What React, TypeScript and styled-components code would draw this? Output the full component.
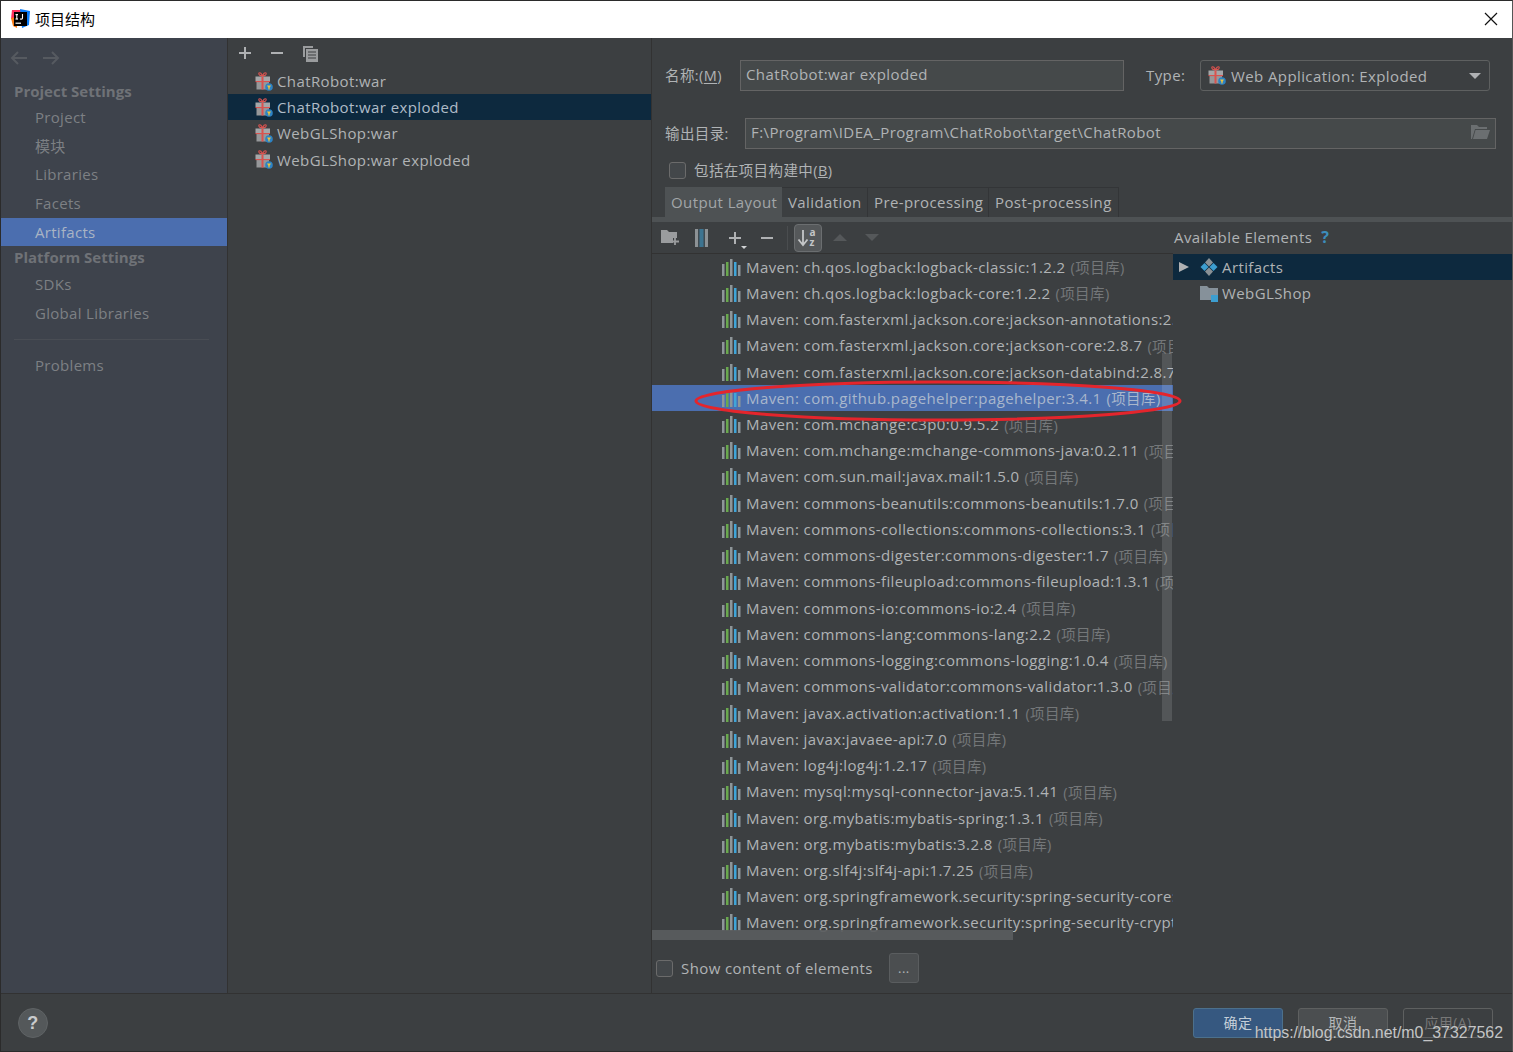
import styled, { createGlobalStyle } from "styled-components";

const GlobalStyle = createGlobalStyle`
  html, body {
    margin: 0;
    padding: 0;
    background: #3c3f41;
  }
  * {
    box-sizing: border-box;
  }
  svg {
    flex: none;
  }
`;

const Window = styled.div`
  position: relative;
  width: 1513px;
  height: 1052px;
  display: flex;
  flex-direction: column;
  overflow: hidden;
  background: #3c3f41;
  border: 1px solid #2b2b2b;
  border-right-color: #555;
  font-family: "Open Sans", "Noto Sans CJK SC", sans-serif;
  font-size: 15px;
  letter-spacing: 0.4px;
  color: #b0b3b5;
`;

const TitleBar = styled.div`
  height: 37px;
  flex: none;
  display: flex;
  align-items: center;
  padding: 0 14px 2px 9px;
  gap: 5px;
  background: #fff;
  color: #000;
  font-size: 15px;
  letter-spacing: 0;
  font-family: "Noto Sans CJK SC", sans-serif;
`;

const TitleText = styled.span`
  flex: 1;
`;

const Body = styled.div`
  flex: 1;
  min-height: 0;
  display: flex;
`;

const Sidebar = styled.nav`
  width: 227px;
  flex: none;
  background: #3e434c;
  border-right: 1px solid #323232;
  color: #7d8084;
  letter-spacing: 0.3px;
`;

const NavArrows = styled.div`
  height: 40px;
  display: flex;
  align-items: center;
  padding: 0 0 0 9px;
  gap: 14px;
`;

const NavHeading = styled.div<{ $compact?: boolean }>`
  height: ${(p) => (p.$compact ? 24 : 26)}px;
  line-height: ${(p) => (p.$compact ? 22 : 26)}px;
  padding-left: 13px;
  font-weight: 700;
  letter-spacing: 0;
  color: #6f7277;
  margin-bottom: ${(p) => (p.$compact ? 0 : -1)}px;
`;

const NavItem = styled.div<{ $active?: boolean }>`
  height: 28.7px;
  line-height: 28px;
  padding-left: 34px;
  background: ${(p) => (p.$active ? "#4b6eaf" : "transparent")};
  color: ${(p) => (p.$active ? "#a9b4c4" : "inherit")};
`;

const NavDivider = styled.div`
  height: 1px;
  margin: 11px 18px 11px 13px;
  background: #494d54;
`;

const ArtifactPanel = styled.div`
  width: 424px;
  flex: none;
  display: flex;
  flex-direction: column;
  background: #3c3f41;
  border-right: 1px solid #323232;
`;

const SmallToolbar = styled.div`
  height: 30px;
  display: flex;
  align-items: center;
  padding-left: 10px;
  gap: 18px;
`;

const ArtifactRow = styled.div<{ $selected?: boolean }>`
  height: 26.2px;
  display: flex;
  align-items: center;
  gap: 4px;
  padding-left: 27px;
  background: ${(p) => (p.$selected ? "#0d293e" : "transparent")};
  color: ${(p) => (p.$selected ? "#b0bcc8" : "inherit")};
`;

const Main = styled.div`
  flex: 1;
  min-width: 0;
  display: flex;
  flex-direction: column;
`;

const FormRow = styled.div<{ $top: number }>`
  height: 31px;
  flex: none;
  margin-top: ${(p) => p.$top}px;
  display: flex;
  align-items: center;
  padding-left: 13px;
`;

const FieldLabel = styled.label<{ $width: number }>`
  width: ${(p) => p.$width}px;
  flex: none;
  font-size: 14.5px;
  margin-top: -2px;

  u {
    text-underline-offset: 2px;
  }
`;

const TextField = styled.div<{ $width: number }>`
  width: ${(p) => p.$width}px;
  height: 100%;
  flex: none;
  display: flex;
  align-items: center;
  justify-content: space-between;
  padding: 0 5px 3px;
  background: #45494a;
  border: 1px solid #646464;
`;

const TypeLabel = styled.span`
  margin-left: 22px;
  width: 54px;
  margin-top: -2px;
`;

const Select = styled.div`
  width: 290px;
  height: 100%;
  display: flex;
  align-items: center;
  gap: 5px;
  padding: 0 7px;
  border: 1px solid #5e6060;
  border-radius: 3px;
`;

const SelectText = styled.span`
  flex: 1;
  white-space: nowrap;
`;

const Caret = styled.span`
  width: 0;
  height: 0;
  border-left: 6px solid transparent;
  border-right: 6px solid transparent;
  border-top: 6px solid #afb1b3;
  margin-right: 1px;
`;

const CheckRow = styled.div`
  height: 18px;
  flex: none;
  margin-top: 12px;
  display: flex;
  align-items: center;
  gap: 8px;
  padding-left: 17px;
  font-size: 14.5px;
`;

const CheckLabel = styled.span`
  margin-top: -2px;
`;

const Checkbox = styled.span`
  width: 17px;
  height: 17px;
  flex: none;
  background: #43474a;
  border: 1px solid #6b6b6b;
  border-radius: 3px;
`;

const Tabs = styled.div`
  height: 30px;
  flex: none;
  margin-top: 8px;
  display: flex;
  padding-left: 13px;
`;

const Tab = styled.div<{ $active?: boolean; $width: number }>`
  width: ${(p) => p.$width}px;
  display: flex;
  align-items: center;
  padding: 0 0 1px 6px;
  white-space: nowrap;
  background: ${(p) => (p.$active ? "#4e5254" : "transparent")};
  border: 1px solid ${(p) => (p.$active ? "#4e5254" : "#333537")};
  border-bottom: none;
  border-left: none;
  color: ${(p) => (p.$active ? "#a2a6a8" : "#b0b3b5")};
`;

const TabLine = styled.div`
  height: 5px;
  flex: none;
  background: #4e5254;
`;

const Split = styled.div`
  flex: 1;
  min-height: 0;
  display: flex;
`;

const LayoutColumn = styled.div`
  width: 521px;
  flex: none;
  display: flex;
  flex-direction: column;
`;

const LayoutToolbar = styled.div`
  height: 32px;
  flex: none;
  display: flex;
  align-items: center;
  padding-left: 9px;
  border-bottom: 1px solid #323232;
`;

const ToolButton = styled.span<{ $gap?: number }>`
  position: relative;
  display: inline-flex;
  margin-left: ${(p) => p.$gap ?? 0}px;
`;

const ToolDropMark = styled.span`
  position: absolute;
  right: -5px;
  bottom: -4px;
  width: 0;
  height: 0;
  border-left: 3px solid transparent;
  border-right: 3px solid transparent;
  border-top: 3px solid #d0d2d4;
`;

const ToolSeparator = styled.span`
  width: 1px;
  height: 24px;
  margin: 0 6px 0 13px;
  background: #4a4d4f;
`;

const SortButton = styled.span`
  width: 28px;
  height: 28px;
  display: inline-flex;
  align-items: center;
  justify-content: center;
  background: #55585a;
  border: 1px solid #6b6e70;
  border-radius: 4px;
`;

const Triangle = styled.span<{ $down?: boolean; $gap: number }>`
  width: 0;
  height: 0;
  margin-left: ${(p) => p.$gap}px;
  border-left: 7px solid transparent;
  border-right: 7px solid transparent;
  border-top: ${(p) => (p.$down ? "7px solid #55585a" : "none")};
  border-bottom: ${(p) => (p.$down ? "none" : "7px solid #55585a")};
`;

const Tree = styled.div`
  position: relative;
  height: 686px;
  flex: none;
  overflow: hidden;
`;

const TreeRow = styled.div<{ $selected?: boolean }>`
  height: 26.24px;
  display: flex;
  align-items: center;
  gap: 5px;
  padding: 0 0 1px 70px;
  white-space: nowrap;
  background: ${(p) => (p.$selected ? "#4b6eaf" : "transparent")};
  color: ${(p) => (p.$selected ? "#a9b7cc" : "inherit")};

  svg {
    margin-top: 1px;
  }
`;

const Suffix = styled.span<{ $selected?: boolean }>`
  font-size: 14.5px;
  color: ${(p) => (p.$selected ? "#a9b7cc" : "#747779")};
`;

const VerticalThumb = styled.div`
  position: absolute;
  top: 99px;
  right: 1px;
  width: 10px;
  height: 368px;
  background: rgba(255, 255, 255, 0.12);
`;

const HorizontalThumb = styled.div`
  position: absolute;
  left: 0;
  bottom: 0;
  width: 361px;
  height: 10px;
  background: #5a5c5e;
  opacity: 0.92;
`;

const ShowContentRow = styled.div`
  flex: 1;
  display: flex;
  align-items: center;
  gap: 8px;
  padding: 3px 0 0 4px;
`;

const SmallButton = styled.span`
  width: 30px;
  height: 30px;
  margin-left: 8px;
  display: inline-flex;
  align-items: center;
  justify-content: center;
  background: #4b4e50;
  border: 1px solid #5a5d5f;
  border-radius: 3px;
  font-size: 13px;
`;

const ElementsColumn = styled.div`
  flex: 1;
  min-width: 0;
`;

const ElementsHeader = styled.div`
  height: 32px;
  display: flex;
  align-items: center;
  gap: 9px;
  padding: 0 0 2px 1px;
`;

const HelpMark = styled.span`
  color: #3c8dbc;
  font-weight: 700;
  font-size: 16px;
`;

const ElementRow = styled.div<{ $selected?: boolean }>`
  height: 26.24px;
  display: flex;
  align-items: center;
  padding-left: 27px;
  gap: 4px;
  background: ${(p) => (p.$selected ? "#0d293e" : "transparent")};
  position: relative;
`;

const Expander = styled.span`
  position: absolute;
  left: 6px;
  top: 8px;
  width: 0;
  height: 0;
  border-top: 5.5px solid transparent;
  border-bottom: 5.5px solid transparent;
  border-left: 10px solid #afb1b3;
`;

const Footer = styled.footer`
  height: 58px;
  flex: none;
  display: flex;
  align-items: center;
  padding: 0 19px 0 17px;
  background: #3c3f41;
  border-top: 1px solid #323232;
`;

const HelpButton = styled.span`
  width: 30px;
  height: 30px;
  display: inline-flex;
  align-items: center;
  justify-content: center;
  margin: 1px auto 0 0;
  border-radius: 50%;
  background: #54585a;
  border: 1px solid #5f6365;
  color: #c9cbcd;
  font-size: 18px;
  font-weight: 700;
  font-family: "Liberation Sans", sans-serif;
`;

const DialogButton = styled.span<{ $primary?: boolean; $disabled?: boolean }>`
  width: 90px;
  height: 30px;
  margin-left: 15px;
  padding-bottom: 2px;
  display: inline-flex;
  align-items: center;
  justify-content: center;
  font-size: 14px;
  border-radius: 3px;
  background: ${(p) => (p.$primary ? "#365880" : p.$disabled ? "transparent" : "#4b4e50")};
  border: 1px solid ${(p) => (p.$primary ? "#4c708c" : "#5e6060")};
  color: ${(p) => (p.$primary ? "#c4ced8" : p.$disabled ? "#777" : "#b4b7b9")};
`;

const Watermark = styled.div`
  position: absolute;
  right: 9px;
  bottom: 9px;
  font-family: "Liberation Sans", sans-serif;
  font-size: 15.9px;
  letter-spacing: 0;
  line-height: 18px;
  color: #c4c5c6;
  text-shadow: 0 0 1px rgba(60, 63, 65, 0.6);
`;

const Annotation = styled.svg`
  position: absolute;
  left: 692px;
  top: 377px;
  pointer-events: none;
`;

const IdeaLogo = () => (
  <svg width="20" height="20" viewBox="0 0 20 20">
    <path d="M2 1 L12 1 L9 12 L1 10 Z" fill="#fe315d" />
    <path d="M10 0 L20 2 L19 16 L12 19 Z" fill="#087cfa" />
    <path d="M1 9 L7 8 L7 19 L3 17 Z" fill="#f97a12" />
    <rect x="4" y="3" width="13" height="14" fill="#000" />
    <rect x="5.5" y="5" width="2.5" height="1.2" fill="#fff" />
    <rect x="6.3" y="5" width="1" height="5" fill="#fff" />
    <rect x="5.5" y="9.4" width="2.5" height="1.2" fill="#fff" />
    <path d="M12.5 5 V9 Q12.5 10.5 10 10" stroke="#fff" strokeWidth="1.1" fill="none" />
    <rect x="5.5" y="13.6" width="5.5" height="1.2" fill="#fff" />
  </svg>
);

const CloseIcon = () => (
  <svg width="14" height="14" viewBox="0 0 14 14">
    <path d="M1 1 L13 13 M13 1 L1 13" stroke="#111" strokeWidth="1.2" />
  </svg>
);

const ArrowIcon = ({ flip }: { flip?: boolean }) => (
  <svg width="18" height="14" viewBox="0 0 18 14" style={flip ? { transform: "scaleX(-1)" } : undefined}>
    <path d="M17 7 H2 M8 1 L2 7 L8 13" stroke="#565a60" strokeWidth="2" fill="none" />
  </svg>
);

const PlusIcon = () => (
  <svg width="14" height="14" viewBox="0 0 14 14">
    <path d="M7 1 V13 M1 7 H13" stroke="#afb1b3" strokeWidth="2" />
  </svg>
);

const MinusIcon = () => (
  <svg width="14" height="14" viewBox="0 0 14 14">
    <path d="M1 7 H13" stroke="#afb1b3" strokeWidth="2" />
  </svg>
);

const CopyIcon = () => (
  <svg width="16" height="17" viewBox="0 0 16 17">
    <path d="M1 1 H11 V3 H3 V12 H1 Z" fill="#9a9c9e" />
    <rect x="4" y="4" width="12" height="13" fill="#9a9c9e" />
    <path d="M6 7 H14 M6 10 H14 M6 13 H14" stroke="#3c3f41" strokeWidth="1.2" />
  </svg>
);

const GiftIcon = () => (
  <svg width="18" height="19" viewBox="0 0 18 19">
    <path d="M7.5 4 Q3 3.5 4 1 Q6 0 7.5 4 Q9 0 11 1 Q12 3.5 7.5 4" stroke="#d9534f" strokeWidth="1.1" fill="none" />
    <rect x="0.5" y="4.5" width="14.5" height="4.5" fill="#a5a7a9" />
    <rect x="1.5" y="10" width="12.5" height="7.5" fill="#96989a" />
    <rect x="6.5" y="4.5" width="2" height="13" fill="#d9534f" />
    <rect x="0.5" y="9" width="14.5" height="1.1" fill="#d9534f" />
    <circle cx="14" cy="15" r="3.8" fill="#2d83c4" />
    <path d="M12 13.5 H16 L14.6 15.8 V17.5 H13.4 V15.8 Z" fill="#f0c43c" />
  </svg>
);

const MavenIcon = () => (
  <svg width="19" height="17" viewBox="0 0 19 17">
    <rect x="0" y="5" width="2.5" height="12" fill="#8e9699" />
    <rect x="4" y="3" width="2.5" height="14" fill="#6aa84f" />
    <rect x="8" y="0" width="2.5" height="17" fill="#8e9699" />
    <rect x="12" y="3" width="2.5" height="14" fill="#40a5d8" />
    <rect x="16" y="6" width="2.5" height="11" fill="#8e9699" />
  </svg>
);

const AddFolderIcon = () => (
  <svg width="18" height="15" viewBox="0 0 18 15">
    <path d="M0 0 H6 L8 2 H16 V8 H12 V13 H0 Z" fill="#9a9c9e" />
    <path d="M14 8 V15 M10.5 11.5 H18" stroke="#9a9c9e" strokeWidth="1.8" />
  </svg>
);

const ArchiveIcon = () => (
  <svg width="13" height="18" viewBox="0 0 13 18">
    <rect x="0" y="0" width="13" height="18" fill="#8d9295" />
    <rect x="3" y="0" width="7" height="18" fill="#3f4a50" />
    <path d="M4.5 1 H8.5 M4.5 3 H8.5 M4.5 5 H8.5 M4.5 7 H8.5 M4.5 9 H8.5 M4.5 11 H8.5 M4.5 13 H8.5 M4.5 15 H8.5 M4.5 17 H8.5" stroke="#3d9ed0" strokeWidth="1" />
  </svg>
);

const SortIcon = () => (
  <svg width="22" height="22" viewBox="0 0 22 22">
    <path d="M6 3 V17 M1.5 12.5 L6 18 L10.5 12.5" stroke="#c4c6c8" strokeWidth="1.8" fill="none" />
    <text x="12.5" y="9" fontSize="10" fontWeight="700" fill="#c4c6c8" fontFamily="Open Sans, sans-serif">a</text>
    <text x="12.5" y="19" fontSize="10" fontWeight="700" fill="#c4c6c8" fontFamily="Open Sans, sans-serif">z</text>
  </svg>
);

const FolderOpenIcon = () => (
  <svg width="19" height="14" viewBox="0 0 19 14">
    <path d="M0 0 H6 L8 2 H16 V4 H4 L1 14 H0 Z" fill="#6b6f71" />
    <path d="M4.5 5 H19 L16 14 H2 Z" fill="#6b6f71" />
  </svg>
);

const ArtifactsIcon = () => (
  <svg width="18" height="18" viewBox="0 0 18 18">
    <path d="M9 0 L13 4.5 L9 8.5 L5 4.5 Z" fill="#8a9196" />
    <path d="M9 9.5 L13 13.5 L9 18 L5 13.5 Z" fill="#8a9196" />
    <path d="M4.5 5 L8.5 9 L4.5 13 L0.5 9 Z" fill="#3d9ed0" />
    <path d="M13.5 5 L17.5 9 L13.5 13 L9.5 9 Z" fill="#3d9ed0" />
  </svg>
);

const ModuleIcon = () => (
  <svg width="18" height="17" viewBox="0 0 18 17">
    <path d="M0 1 H7 L9 3 H18 V15 H0 Z" fill="#86919a" />
    <rect x="11" y="10" width="7" height="7" fill="#3d9ed0" />
  </svg>
);

const artifacts = ["ChatRobot:war", "ChatRobot:war exploded", "WebGLShop:war", "WebGLShop:war exploded"];

const libraries = [
  "ch.qos.logback:logback-classic:1.2.2",
  "ch.qos.logback:logback-core:1.2.2",
  "com.fasterxml.jackson.core:jackson-annotations:2.8.7",
  "com.fasterxml.jackson.core:jackson-core:2.8.7",
  "com.fasterxml.jackson.core:jackson-databind:2.8.7",
  "com.github.pagehelper:pagehelper:3.4.1",
  "com.mchange:c3p0:0.9.5.2",
  "com.mchange:mchange-commons-java:0.2.11",
  "com.sun.mail:javax.mail:1.5.0",
  "commons-beanutils:commons-beanutils:1.7.0",
  "commons-collections:commons-collections:3.1",
  "commons-digester:commons-digester:1.7",
  "commons-fileupload:commons-fileupload:1.3.1",
  "commons-io:commons-io:2.4",
  "commons-lang:commons-lang:2.2",
  "commons-logging:commons-logging:1.0.4",
  "commons-validator:commons-validator:1.3.0",
  "javax.activation:activation:1.1",
  "javax:javaee-api:7.0",
  "log4j:log4j:1.2.17",
  "mysql:mysql-connector-java:5.1.41",
  "org.mybatis:mybatis-spring:1.3.1",
  "org.mybatis:mybatis:3.2.8",
  "org.slf4j:slf4j-api:1.7.25",
  "org.springframework.security:spring-security-core:4.2.2",
  "org.springframework.security:spring-security-crypto:4.2.2",
];

export default function App() {
  return (
    <>
      <GlobalStyle />
      <Window>
        <TitleBar>
          <IdeaLogo />
          <TitleText>项目结构</TitleText>
          <CloseIcon />
        </TitleBar>
        <Body>
          <Sidebar>
            <NavArrows>
              <ArrowIcon />
              <ArrowIcon flip />
            </NavArrows>
            <NavHeading>Project Settings</NavHeading>
            <NavItem>Project</NavItem>
            <NavItem>模块</NavItem>
            <NavItem>Libraries</NavItem>
            <NavItem>Facets</NavItem>
            <NavItem $active>Artifacts</NavItem>
            <NavHeading $compact>Platform Settings</NavHeading>
            <NavItem>SDKs</NavItem>
            <NavItem>Global Libraries</NavItem>
            <NavDivider />
            <NavItem>Problems</NavItem>
          </Sidebar>
          <ArtifactPanel>
            <SmallToolbar>
              <PlusIcon />
              <MinusIcon />
              <CopyIcon />
            </SmallToolbar>
            {artifacts.map((name, i) => (
              <ArtifactRow key={name} $selected={i === 1}>
                <GiftIcon />
                {name}
              </ArtifactRow>
            ))}
          </ArtifactPanel>
          <Main>
            <FormRow $top={22}>
              <FieldLabel $width={75}>
                名称:(<u>M</u>)
              </FieldLabel>
              <TextField $width={384}>ChatRobot:war exploded</TextField>
              <TypeLabel>Type:</TypeLabel>
              <Select>
                <GiftIcon />
                <SelectText>Web Application: Exploded</SelectText>
                <Caret />
              </Select>
            </FormRow>
            <FormRow $top={27}>
              <FieldLabel $width={80}>输出目录:</FieldLabel>
              <TextField $width={751}>
                F:\Program\IDEA_Program\ChatRobot\target\ChatRobot
                <FolderOpenIcon />
              </TextField>
            </FormRow>
            <CheckRow>
              <Checkbox />
              <CheckLabel>
                包括在项目构建中(<u>B</u>)
              </CheckLabel>
            </CheckRow>
            <Tabs>
              <Tab $active $width={117}>Output Layout</Tab>
              <Tab $width={86}>Validation</Tab>
              <Tab $width={121}>Pre-processing</Tab>
              <Tab $width={130}>Post-processing</Tab>
            </Tabs>
            <TabLine />
            <Split>
              <LayoutColumn>
                <LayoutToolbar>
                  <AddFolderIcon />
                  <ToolButton $gap={16}>
                    <ArchiveIcon />
                  </ToolButton>
                  <ToolButton $gap={20}>
                    <PlusIcon />
                    <ToolDropMark />
                  </ToolButton>
                  <ToolButton $gap={18}>
                    <MinusIcon />
                  </ToolButton>
                  <ToolSeparator />
                  <SortButton>
                    <SortIcon />
                  </SortButton>
                  <Triangle $gap={11} />
                  <Triangle $gap={18} $down />
                </LayoutToolbar>
                <Tree>
                  {libraries.map((lib, i) => (
                    <TreeRow key={lib} $selected={i === 5}>
                      <MavenIcon />
                      <span>Maven: {lib}</span>
                      <Suffix $selected={i === 5}>(项目库)</Suffix>
                    </TreeRow>
                  ))}
                  <VerticalThumb />
                  <HorizontalThumb />
                </Tree>
                <ShowContentRow>
                  <Checkbox />
                  <span>Show content of elements</span>
                  <SmallButton>...</SmallButton>
                </ShowContentRow>
              </LayoutColumn>
              <ElementsColumn>
                <ElementsHeader>
                  Available Elements
                  <HelpMark>?</HelpMark>
                </ElementsHeader>
                <ElementRow $selected>
                  <Expander />
                  <ArtifactsIcon />
                  Artifacts
                </ElementRow>
                <ElementRow>
                  <ModuleIcon />
                  WebGLShop
                </ElementRow>
              </ElementsColumn>
            </Split>
          </Main>
        </Body>
        <Footer>
          <HelpButton>?</HelpButton>
          <DialogButton $primary>确定</DialogButton>
          <DialogButton>取消</DialogButton>
          <DialogButton $disabled>应用(A)</DialogButton>
        </Footer>
        <Watermark>https://blog.csdn.net/m0_37327562</Watermark>
        <Annotation width="490" height="46" viewBox="0 0 490 46">
          <ellipse cx="245" cy="23" rx="242" ry="19" fill="none" stroke="#e4252c" strokeWidth="3" />
        </Annotation>
      </Window>
    </>
  );
}
